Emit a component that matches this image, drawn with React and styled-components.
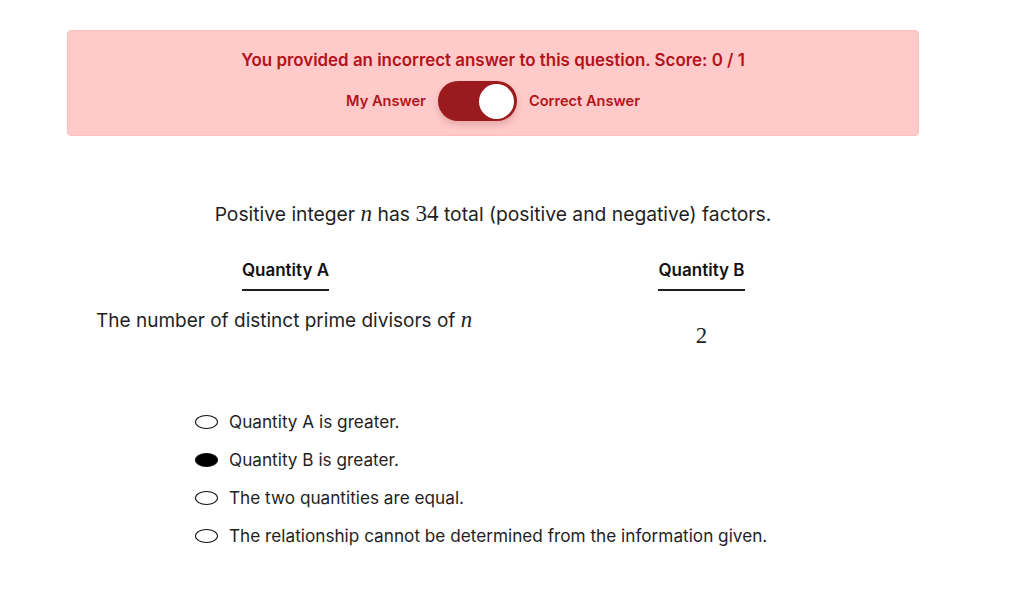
import styled, { createGlobalStyle } from "styled-components";

const GlobalStyle = createGlobalStyle`
  body {
    margin: 0;
    background: #ffffff;
    font-family: Inter, "Open Sans", sans-serif;
    color: #1f1f1f;
  }
`;

const Page = styled.div`
  width: 852px;
  padding: 30px 0 40px 67px;
`;

const Banner = styled.div`
  background: #ffcaca;
  border: 1px solid #ffbdbd;
  border-radius: 4px;
  padding: 18px 0 14px;
  display: flex;
  flex-direction: column;
  align-items: center;
  gap: 10px;
  color: #b3131b;
`;

const BannerTitle = styled.div`
  font-size: 16.9px;
  font-weight: 600;
  line-height: 22px;
`;

const ToggleRow = styled.div`
  display: flex;
  align-items: center;
  gap: 12px;
  font-size: 14.6px;
  font-weight: 600;
`;

const Track = styled.div`
  width: 79px;
  height: 40px;
  border-radius: 20px;
  background: #9a1a1d;
  display: flex;
  align-items: center;
  justify-content: ${(p) => (p.$on ? "flex-end" : "flex-start")};
  padding: 0 3px;
  box-sizing: border-box;
  box-shadow: 0 4px 6px rgba(120, 20, 20, 0.18);
`;

const Knob = styled.div`
  width: 35px;
  height: 35px;
  border-radius: 50%;
  background: #ffffff;
`;

const Question = styled.p`
  margin: 64px 0 0;
  text-align: center;
  font-size: 19.3px;
  line-height: 26px;
`;

const MathVar = styled.span`
  font-family: "Liberation Serif", "DejaVu Serif", serif;
  font-style: ${(p) => (p.$italic ? "italic" : "normal")};
  font-size: 1.2em;
`;

const Quantities = styled.div`
  display: grid;
  grid-template-columns: 1fr 1fr;
  column-gap: 37px;
  margin: 32px 28px 0 29px;
`;

const Column = styled.div`
  display: flex;
  flex-direction: column;
  align-items: ${(p) => (p.$center ? "center" : "flex-start")};
`;

const HeadWrap = styled.div`
  align-self: center;
`;

const Heading = styled.div`
  font-size: 17px;
  font-weight: 600;
  line-height: 22px;
  padding-bottom: 8px;
  border-bottom: 2px solid #1f1f1f;
  color: #111;
`;

const Cell = styled.div`
  font-size: 19px;
  line-height: 26px;
  margin-top: ${(p) => p.$top}px;
`;

const Options = styled.div`
  margin: 60px 0 0 128px;
  display: flex;
  flex-direction: column;
  gap: 14px;
`;

const Option = styled.label`
  display: flex;
  align-items: center;
  gap: 11px;
  font-size: 17.2px;
  line-height: 24px;
`;

const Radio = styled.span`
  width: 21px;
  height: 12px;
  border-radius: 50%;
  border: 1.5px solid #111;
  background: ${(p) => (p.$checked ? "#000" : "#fff")};
  flex: none;
`;

const choices = [
  "Quantity A is greater.",
  "Quantity B is greater.",
  "The two quantities are equal.",
  "The relationship cannot be determined from the information given.",
];

export default function App() {
  return (
    <>
      <GlobalStyle />
      <Page>
        <Banner>
          <BannerTitle>You provided an incorrect answer to this question. Score: 0 / 1</BannerTitle>
          <ToggleRow>
            <span>My Answer</span>
            <Track $on>
              <Knob />
            </Track>
            <span>Correct Answer</span>
          </ToggleRow>
        </Banner>

        <Question>
          Positive integer <MathVar $italic>n</MathVar> has <MathVar>34</MathVar> total
          (positive and negative) factors.
        </Question>

        <Quantities>
          <Column>
            <HeadWrap>
              <Heading>Quantity A</Heading>
            </HeadWrap>
            <Cell $top={16}>
              The number of distinct prime divisors of <MathVar $italic>n</MathVar>
            </Cell>
          </Column>
          <Column $center>
            <Heading>Quantity B</Heading>
            <Cell $top={32}>
              <MathVar>2</MathVar>
            </Cell>
          </Column>
        </Quantities>

        <Options>
          {choices.map((c, i) => (
            <Option key={c}>
              <Radio $checked={i === 1} />
              {c}
            </Option>
          ))}
        </Options>
      </Page>
    </>
  );
}
